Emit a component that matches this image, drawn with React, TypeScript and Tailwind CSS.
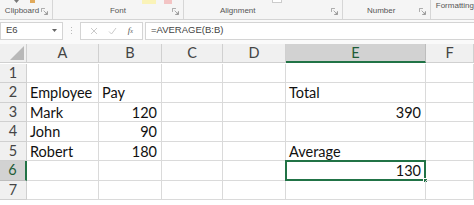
import React from 'react';

const cols = ['A', 'B', 'C', 'D', 'E', 'F'];

type Cell = { text: string; right?: boolean };

const rows: Cell[][] = [
  [],
  [{ text: 'Employee' }, { text: 'Pay' }, { text: '' }, { text: '' }, { text: 'Total' }],
  [{ text: 'Mark' }, { text: '120', right: true }, { text: '' }, { text: '' }, { text: '390', right: true }],
  [{ text: 'John' }, { text: '90', right: true }],
  [{ text: 'Robert' }, { text: '180', right: true }, { text: '' }, { text: '' }, { text: 'Average' }],
  [{ text: '' }, { text: '' }, { text: '' }, { text: '' }, { text: '130', right: true }],
  [],
];

const Launcher = () => (
  <svg width="7" height="7" viewBox="0 0 8 8" className="text-[#888]">
    <path d="M0.5 0.5h4M0.5 0.5v4M7.5 3.5v4h-4M3 3l4 4M7 4.5V7H4.5" stroke="currentColor" strokeWidth="0.8" fill="none" />
  </svg>
);

const RibbonGroup = ({ label, className }: { label: string; className: string }) => (
  <div className={`relative h-full border-r border-[#d6d6d6] flex items-end ${className}`}>
    <div className="flex-1 text-center text-[8px] leading-none pb-[4px] text-[#555]">{label}</div>
    <div className="absolute right-[4px] bottom-[4px]"><Launcher /></div>
  </div>
);

export default function App() {
  return (
    <div className="w-[474px] h-[205px] overflow-hidden bg-white font-['Liberation_Sans',sans-serif]">
      {/* Ribbon bottom strip */}
      <div className="relative h-[20px] bg-[#f5f5f5] border-b border-[#d4d4d4] flex">
        <RibbonGroup label="Clipboard" className="w-[54px] pr-[8px]" />
        <RibbonGroup label="Font" className="w-[134px]" />
        <RibbonGroup label="Alignment" className="w-[161px] pr-[50px]" />
        <RibbonGroup label="Number" className="w-[90px] pr-[10px]" />
        <div className="flex-1 text-[8px] leading-none pt-[2px] pl-[5px] text-[#555]">Formatting</div>
        <svg className="absolute left-[14px] top-0" width="5" height="3" viewBox="0 0 5 3"><path d="M0 0h5L2.5 3Z" fill="#777" /></svg>
        <span className="absolute left-[30px] top-0 w-[5px] h-[3px] bg-[#e0a95a]" />
        <span className="absolute left-[142px] top-0 w-[14px] h-[4px] bg-[#faf3b8]" />
        <span className="absolute left-[164px] top-0 w-[8px] h-[4px] bg-[#f3c4c4]" />
        <span className="absolute left-[272px] top-0 w-[10px] h-[3px] bg-white border border-[#ccc] border-t-0" />
      </div>

      {/* Formula bar */}
      <div className="h-[21px] bg-[#fafafa] flex items-center pt-[1px] pb-[1px]">
        <div className="w-[63px] h-[18px] bg-white border border-[#d4d4d4] flex items-center justify-between pl-[5px] pr-[5px] text-[9.5px] text-[#444]">
          <span>E6</span>
          <svg width="5" height="3" viewBox="0 0 5 3"><path d="M0 0h5L2.5 3Z" fill="#666" /></svg>
        </div>
        <div className="w-[17px] flex flex-col items-center gap-[2px]">
          <span className="w-[1px] h-[1px] bg-[#bbb]" />
          <span className="w-[1px] h-[1px] bg-[#bbb]" />
          <span className="w-[1px] h-[1px] bg-[#bbb]" />
        </div>
        <div className="w-[63px] h-[18px] bg-white border border-[#d4d4d4] flex items-center justify-around px-[4px] text-[#aaa]">
          <svg width="8" height="8" viewBox="0 0 8 8"><path d="M1 1l6 6M7 1l-6 6" stroke="#c4c4c4" strokeWidth="0.9" /></svg>
          <svg width="9" height="8" viewBox="0 0 9 8"><path d="M1 4.5l2.5 2.5L8 1" stroke="#c4c4c4" strokeWidth="0.9" fill="none" /></svg>
          <span className="text-[9px] italic text-[#555] font-['Liberation_Serif',serif]">f<span className="text-[6px]">x</span></span>
        </div>
        <div className="flex-1 h-[18px] ml-[2px] bg-white border border-[#d4d4d4] border-r-0 flex items-center pl-[5px] text-[9.5px] text-[#444]">
          =AVERAGE(B:B)
        </div>
      </div>

      <div className="h-[3px] bg-[#fafafa]" />

      {/* Grid */}
      <div className="grid grid-cols-[27px_72px_63px_61px_63px_140px_1fr] auto-rows-[19.5px] font-['Lato',sans-serif] text-[14.5px] text-[#111]">
        <div className="h-[19px] bg-[#f0f0f0] border-r border-b border-[#d0d0d0] flex items-end justify-end p-[2px]">
          <svg width="14" height="14" viewBox="0 0 14 14"><path d="M14 0V14H0Z" fill="#b8b8b8" /></svg>
        </div>
        {cols.map((c) => (
          <div
            key={c}
            className={
              c === 'E'
                ? 'h-[19px] bg-[#d2d2d2] border-r border-[#bdbdbd] border-b-2 border-b-[#217346] flex items-center justify-center text-[#1e5c38]'
                : 'h-[19px] bg-[#f0f0f0] border-r border-b border-[#d0d0d0] flex items-center justify-center text-[#444]'
            }
          >
            {c}
          </div>
        ))}
        {rows.map((r, i) => (
          <React.Fragment key={i}>
            <div
              className={
                i === 5
                  ? 'bg-[#d2d2d2] border-r-2 border-r-[#217346] border-b border-[#bdbdbd] flex items-center justify-center text-[#1e5c38]'
                  : 'bg-[#f0f0f0] border-r border-b border-[#d0d0d0] flex items-center justify-center text-[#444]'
              }
            >
              {i + 1}
            </div>
            {cols.map((c, j) => {
              const cell = r[j];
              const selected = i === 5 && c === 'E';
              return (
                <div
                  key={c}
                  className={`relative border-r border-b border-[#dadada] flex items-center leading-none pt-[2px] ${
                    cell?.right ? 'justify-end pr-[4px]' : 'justify-start pl-[3px]'
                  }`}
                >
                  {cell?.text}
                  {selected && (
                    <>
                      <div className="absolute left-[-1px] top-[-1px] right-[-1px] bottom-[-1px] border-2 border-[#217346]" />
                      <div className="absolute right-[-3px] bottom-[-3px] w-[5px] h-[5px] bg-[#217346] border border-white" />
                    </>
                  )}
                </div>
              );
            })}
          </React.Fragment>
        ))}
      </div>
    </div>
  );
}
